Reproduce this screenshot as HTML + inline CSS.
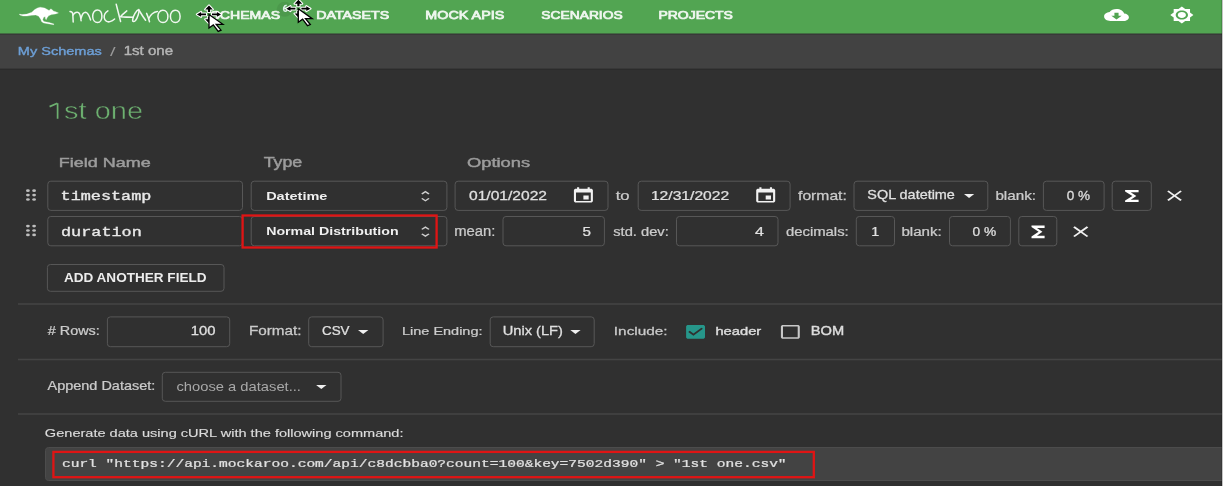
<!DOCTYPE html>
<html><head><meta charset="utf-8"><title>Mockaroo - 1st one</title>
<style>html,body{margin:0;padding:0;background:#303030;overflow:hidden;width:1223px;height:486px}svg{display:block;position:absolute;left:-3px;top:-3px;filter:blur(0.3px)}</style>
</head><body>
<svg width="1229" height="492" viewBox="-3 -3 1229 492">
<rect x="-3" y="-3" width="1229" height="492" fill="#303030"/>
<rect x="0" y="68.6" width="1223" height="1.2" fill="#000" fill-opacity="0.12"/>
<rect x="-3" y="33.5" width="1226" height="35.1" fill="#424242"/>
<rect x="0" y="33.5" width="1223" height="1.3" fill="#000" fill-opacity="0.18"/>
<rect x="-3" y="-3" width="1226" height="36.5" fill="#52a552"/>
<rect x="18" y="303.25" width="1204" height="1.5" fill="#444444"/>
<rect x="18" y="358.75" width="1204" height="1.5" fill="#444444"/>
<rect x="18" y="413.25" width="1204" height="1.5" fill="#444444"/>
<rect x="47.8" y="181.2" width="194.7" height="29.2" rx="3" ry="3" fill="none" stroke="#575757" stroke-width="1"/>
<rect x="251.2" y="181.2" width="195.7" height="29.2" rx="3" ry="3" fill="none" stroke="#575757" stroke-width="1"/>
<rect x="47.8" y="216.5" width="194.7" height="29.3" rx="3" ry="3" fill="none" stroke="#575757" stroke-width="1"/>
<rect x="251.2" y="216.5" width="195.7" height="29.3" rx="3" ry="3" fill="none" stroke="#575757" stroke-width="1"/>
<rect x="455.1" y="181.2" width="152.9" height="29.2" rx="3" ry="3" fill="none" stroke="#575757" stroke-width="1"/>
<rect x="638.2" y="181.2" width="151.9" height="29.2" rx="3" ry="3" fill="none" stroke="#575757" stroke-width="1"/>
<rect x="854.0" y="181.2" width="133.8" height="29.2" rx="3" ry="3" fill="none" stroke="#575757" stroke-width="1"/>
<rect x="1043.4" y="181.2" width="60.7" height="29.2" rx="3" ry="3" fill="none" stroke="#575757" stroke-width="1"/>
<rect x="1112.2" y="181.2" width="39.1" height="29.2" rx="3" ry="3" fill="none" stroke="#575757" stroke-width="1"/>
<rect x="503.0" y="216.5" width="101.4" height="29.3" rx="3" ry="3" fill="none" stroke="#575757" stroke-width="1"/>
<rect x="676.5" y="216.5" width="101.5" height="29.3" rx="3" ry="3" fill="none" stroke="#575757" stroke-width="1"/>
<rect x="856.3" y="216.5" width="38.2" height="29.3" rx="3" ry="3" fill="none" stroke="#575757" stroke-width="1"/>
<rect x="949.5" y="216.5" width="60.9" height="29.3" rx="3" ry="3" fill="none" stroke="#575757" stroke-width="1"/>
<rect x="1018.8" y="216.5" width="38.0" height="29.3" rx="3" ry="3" fill="none" stroke="#575757" stroke-width="1"/>
<rect x="47.4" y="264.5" width="176.6" height="26.8" rx="3" ry="3" fill="none" stroke="#575757" stroke-width="1"/>
<rect x="107.4" y="316.9" width="122.3" height="29.8" rx="3" ry="3" fill="none" stroke="#575757" stroke-width="1"/>
<rect x="308.7" y="316.9" width="74.4" height="29.8" rx="3" ry="3" fill="none" stroke="#575757" stroke-width="1"/>
<rect x="490.2" y="316.9" width="104.0" height="29.8" rx="3" ry="3" fill="none" stroke="#575757" stroke-width="1"/>
<rect x="162.3" y="372.3" width="178.7" height="29.0" rx="3" ry="3" fill="none" stroke="#575757" stroke-width="1"/>
<rect x="45.5" y="447.5" width="1190" height="33" rx="3" fill="#434343" stroke="#4c4c4c" stroke-width="1"/>
<ellipse cx="27.9" cy="190.7" rx="1.9" ry="1.35" fill="#bdbdbd"/>
<ellipse cx="34.1" cy="190.7" rx="1.9" ry="1.35" fill="#bdbdbd"/>
<ellipse cx="27.9" cy="195.1" rx="1.9" ry="1.35" fill="#bdbdbd"/>
<ellipse cx="34.1" cy="195.1" rx="1.9" ry="1.35" fill="#bdbdbd"/>
<ellipse cx="27.9" cy="199.5" rx="1.9" ry="1.35" fill="#bdbdbd"/>
<ellipse cx="34.1" cy="199.5" rx="1.9" ry="1.35" fill="#bdbdbd"/>
<ellipse cx="27.9" cy="226.1" rx="1.9" ry="1.35" fill="#bdbdbd"/>
<ellipse cx="34.1" cy="226.1" rx="1.9" ry="1.35" fill="#bdbdbd"/>
<ellipse cx="27.9" cy="230.5" rx="1.9" ry="1.35" fill="#bdbdbd"/>
<ellipse cx="34.1" cy="230.5" rx="1.9" ry="1.35" fill="#bdbdbd"/>
<ellipse cx="27.9" cy="234.9" rx="1.9" ry="1.35" fill="#bdbdbd"/>
<ellipse cx="34.1" cy="234.9" rx="1.9" ry="1.35" fill="#bdbdbd"/>
<path transform="matrix(0.9150 0 0 0.6000 414.42 189.00)" d="M12 5.83L15.17 9l1.41-1.41L12 3 7.41 7.59 8.83 9 12 5.83zm0 12.34L8.83 15l-1.41 1.41L12 21l4.59-4.59L15.17 15 12 18.17z" fill="#cfcfcf" />
<path transform="matrix(0.9150 0 0 0.6000 414.42 224.40)" d="M12 5.83L15.17 9l1.41-1.41L12 3 7.41 7.59 8.83 9 12 5.83zm0 12.34L8.83 15l-1.41 1.41L12 21l4.59-4.59L15.17 15 12 18.17z" fill="#cfcfcf" />
<path transform="matrix(1.0556 0 0 0.7650 570.73 186.44)" d="M17 12h-5v5h5v-5zM16 1v2H8V1H6v2H5c-1.11 0-1.99.9-1.99 2L3 19c0 1.1.89 2 2 2h14c1.1 0 2-.9 2-2V5c0-1.1-.9-2-2-2h-1V1h-2zm3 18H5V8h14v11z" fill="#f2f2f2" />
<path transform="matrix(1.0556 0 0 0.7650 753.03 186.44)" d="M17 12h-5v5h5v-5zM16 1v2H8V1H6v2H5c-1.11 0-1.99.9-1.99 2L3 19c0 1.1.89 2 2 2h14c1.1 0 2-.9 2-2V5c0-1.1-.9-2-2-2h-1V1h-2zm3 18H5V8h14v11z" fill="#f2f2f2" />
<path transform="matrix(1.0200 0 0 0.7600 956.86 186.50)" d="M7 10l5 5 5-5z" fill="#f0f0f0" />
<path transform="matrix(1.0400 0 0 0.8000 350.72 322.00)" d="M7 10l5 5 5-5z" fill="#f0f0f0" />
<path transform="matrix(1.0300 0 0 0.8000 563.09 322.00)" d="M7 10l5 5 5-5z" fill="#f0f0f0" />
<path transform="matrix(1.0400 0 0 0.7800 308.82 377.30)" d="M7 10l5 5 5-5z" fill="#f0f0f0" />
<path transform="matrix(1.1250 0 0 0.7500 1118.35 187.00)" d="M18 4H6v2l6.5 6L6 18v2h12v-3h-7l5-5-5-5h7z" fill="#ffffff" />
<path transform="matrix(1.0917 0 0 0.7937 1024.95 222.32)" d="M18 4H6v2l6.5 6L6 18v2h12v-3h-7l5-5-5-5h7z" fill="#ffffff" />
<path transform="matrix(1.0429 0 0 0.7429 1161.99 186.79)" d="M19 6.41L17.59 5 12 10.59 6.41 5 5 6.41 10.59 12 5 17.59 6.41 19 12 13.41 17.59 19 19 17.59 13.41 12z" fill="#f0f0f0" />
<path transform="matrix(1.0786 0 0 0.7643 1067.81 222.48)" d="M19 6.41L17.59 5 12 10.59 6.41 5 5 6.41 10.59 12 5 17.59 6.41 19 12 13.41 17.59 19 19 17.59 13.41 12z" fill="#f0f0f0" />
<rect x="688" y="326.5" width="15" height="11" fill="#303030"/>
<path transform="matrix(1.0500 0 0 0.7556 682.95 322.83)" d="M19 3H5c-1.11 0-2 .9-2 2v14c0 1.1.89 2 2 2h14c1.11 0 2-.9 2-2V5c0-1.1-.89-2-2-2zm-9 14l-5-5 1.41-1.41L10 14.17l7.59-7.59L19 8l-9 9z" fill="#26968a" />
<path transform="matrix(1.0500 0 0 0.7556 777.75 322.83)" d="M19 5v14H5V5h14m0-2H5c-1.1 0-2 .9-2 2v14c0 1.1.9 2 2 2h14c1.1 0 2-.9 2-2V5c0-1.1-.9-2-2-2z" fill="#c8c8c8" />
<path d="M57.6,103.2 V118.8 M57.4,103.2 L49.6,106.6" stroke="#6db070" stroke-width="1.7" fill="none"/>
<rect x="242.6" y="215.5" width="194" height="32" fill="none" stroke="#e01414" stroke-width="2.3"/>
<rect x="53.4" y="451.9" width="760.4" height="25.3" fill="none" stroke="#e01414" stroke-width="2.3"/>
<path transform="matrix(1.0333 0 0 0.7438 1104.10 6.12)" d="M19.35 10.04C18.67 6.59 15.64 4 12 4 9.11 4 6.6 5.64 5.35 8.04 2.34 8.36 0 10.91 0 14c0 3.31 2.69 6 6 6h13c2.76 0 5-2.24 5-5 0-2.64-2.05-4.78-4.65-4.96zM17 13l-5 5-5-5h3V9h4v4h3z" fill="#ffffff" />
<path transform="matrix(1.0212 0 0 0.7471 1169.60 6.08)" d="M20 8.69V4h-4.69L12 .69 8.69 4H4v4.69L.69 12 4 15.31V20h4.69L12 23.31 15.31 20H20v-4.69L23.31 12 20 8.69zM12 18c-3.31 0-6-2.69-6-6s2.69-6 6-6 6 2.69 6 6-2.69 6-6 6zm0-10c-2.21 0-4 1.79-4 4s1.79 4 4 4 4-1.79 4-4-1.79-4-4-4z" fill="#ffffff" />
<rect x="1222" y="-3" width="4" height="492" fill="#c4c4c4"/>
<rect x="1221" y="-3" width="1" height="492" fill="#000" fill-opacity="0.15"/>
<path d="M19.22,14.12 L21.94,14.62 L26.88,14.12 L31.81,12.15 L34.78,9.43 L37.50,7.90 L40.21,7.21 L44.65,7.95 L49.10,10.42 L50.58,8.94 L51.57,9.19 L53.79,11.16 L55.02,11.41 L58.48,12.89 L55.52,13.88 L51.57,14.62 L48.60,15.85 L47.12,17.83 L46.14,19.80 L45.40,18.81 L45.15,16.59 L43.67,17.33 L42.68,19.80 L43.91,21.53 L49.10,22.52 L54.04,24.00 L53.54,24.74 L43.67,23.01 L41.69,21.78 L40.70,19.31 L38.73,16.35 L35.77,15.11 L31.81,15.36 L26.88,16.10 L22.93,16.10 L19.96,15.11 Z" fill="#ffffff" stroke="#ffffff" stroke-width="0.25" stroke-linejoin="round"/>
<path d="M70,11.6 C71.5,11.8 72.6,12.5 72.8,14 L73.2,22" fill="none" stroke="#f0f7f0" stroke-width="1.5" stroke-linecap="round" stroke-linejoin="round"/>
<path d="M73.2,15 C74.5,12.5 77,11.8 78.5,12.6 C80,13.6 80.8,17.5 81.1,20.8" fill="none" stroke="#f0f7f0" stroke-width="1.5" stroke-linecap="round" stroke-linejoin="round"/>
<path d="M81.2,18 C82,14.5 84,12.2 85.7,12.2 C87.5,12.4 89.5,16.5 90.6,19.9" fill="none" stroke="#f0f7f0" stroke-width="1.5" stroke-linecap="round" stroke-linejoin="round"/>
<path d="M97.3,9.9 C94.5,9.9 92.6,13 92.7,16.5 C92.8,20 94.8,22.6 97.5,22.6 C100.3,22.5 102,19.5 101.9,16 C101.8,12.5 100,9.9 97.3,9.9 Z" fill="none" stroke="#f0f7f0" stroke-width="1.5" stroke-linecap="round" stroke-linejoin="round"/>
<path d="M107.9,10.8 C105,12.5 104,15 104.2,17.5 C104.5,21 107.5,22.5 110,21.6 C112,21 113.5,20 114.6,19" fill="none" stroke="#f0f7f0" stroke-width="1.5" stroke-linecap="round" stroke-linejoin="round"/>
<path d="M116.2,4.2 L120.6,21.5" fill="none" stroke="#f0f7f0" stroke-width="1.5" stroke-linecap="round" stroke-linejoin="round"/>
<path d="M126.8,10.9 C124.5,12.8 122,15 120.4,16.8 C124.5,17.2 129,17.3 133.2,17.3" fill="none" stroke="#f0f7f0" stroke-width="1.5" stroke-linecap="round" stroke-linejoin="round"/>
<path d="M138.9,9.5 C136.5,10 133,16 132.6,20 C132.5,22 134,22 135.5,20.5 C137.5,18 139.5,12 138.9,9.5 Z" fill="none" stroke="#f0f7f0" stroke-width="1.5" stroke-linecap="round" stroke-linejoin="round"/>
<path d="M139.2,10.5 C141,13.5 143.5,17.5 145.6,20.3" fill="none" stroke="#f0f7f0" stroke-width="1.5" stroke-linecap="round" stroke-linejoin="round"/>
<path d="M146.6,13.4 C147.8,16 148.8,19 149.5,21.7" fill="none" stroke="#f0f7f0" stroke-width="1.5" stroke-linecap="round" stroke-linejoin="round"/>
<path d="M148.8,18.5 C150.5,14.5 153.5,12 157.4,11.4" fill="none" stroke="#f0f7f0" stroke-width="1.5" stroke-linecap="round" stroke-linejoin="round"/>
<path d="M162.8,10.2 C159.8,10.2 157.8,13.2 157.9,16.6 C158,20 160.2,22.6 163,22.6 C166,22.5 168,19.7 167.9,16.3 C167.8,12.8 165.8,10.2 162.8,10.2 Z" fill="none" stroke="#f0f7f0" stroke-width="1.5" stroke-linecap="round" stroke-linejoin="round"/>
<path d="M175.2,10.2 C172.2,10.2 170.3,13.2 170.4,16.6 C170.5,20 172.6,22.6 175.4,22.6 C178.3,22.5 180.2,19.7 180.1,16.3 C180,12.8 178.2,10.2 175.2,10.2 Z" fill="none" stroke="#f0f7f0" stroke-width="1.5" stroke-linecap="round" stroke-linejoin="round"/>
<text transform="matrix(1.2351 0 0 1 210.44 18.90)" font-family="Liberation Sans" font-weight="normal" font-size="11.41" fill="#eef6ee" stroke="#eef6ee" stroke-width="0.75" >SCHEMAS</text>
<text transform="matrix(1.2466 0 0 1 316.26 18.90)" font-family="Liberation Sans" font-weight="normal" font-size="11.41" fill="#eef6ee" stroke="#eef6ee" stroke-width="0.75" >DATASETS</text>
<text transform="matrix(1.2585 0 0 1 425.35 18.90)" font-family="Liberation Sans" font-weight="normal" font-size="11.41" fill="#eef6ee" stroke="#eef6ee" stroke-width="0.75" >MOCK APIS</text>
<text transform="matrix(1.2108 0 0 1 541.35 18.90)" font-family="Liberation Sans" font-weight="normal" font-size="11.41" fill="#eef6ee" stroke="#eef6ee" stroke-width="0.75" >SCENARIOS</text>
<text transform="matrix(1.2265 0 0 1 658.38 18.90)" font-family="Liberation Sans" font-weight="normal" font-size="11.41" fill="#eef6ee" stroke="#eef6ee" stroke-width="0.75" >PROJECTS</text>
<text transform="matrix(1.2498 0 0 1 17.84 54.90)" font-family="Liberation Sans" font-weight="normal" font-size="11.64" fill="#6d9fd6" stroke="#6d9fd6" stroke-width="0.4" >My Schemas</text>
<text transform="matrix(1.4600 0 0 1 110.00 56.00)" font-family="Liberation Sans" font-weight="normal" font-size="13.70" fill="#9a9a9a"  >/</text>
<text transform="matrix(1.2250 0 0 1 123.64 54.90)" font-family="Liberation Sans" font-weight="normal" font-size="12.32" fill="#b5b5b5" stroke="#b5b5b5" stroke-width="0.4" >1st one</text>
<text transform="matrix(1.2245 0 0 1 64.12 118.80)" font-family="Liberation Sans" font-weight="normal" font-size="23.69" fill="#6db070"  stroke="#303030" stroke-width="0.5">st one</text>
<text transform="matrix(1.3417 0 0 1 58.86 166.80)" font-family="Liberation Sans" font-weight="normal" font-size="13.42" fill="#9c9c9c" stroke="#9c9c9c" stroke-width="0.45" >Field Name</text>
<text transform="matrix(1.2569 0 0 1 263.64 166.80)" font-family="Liberation Sans" font-weight="normal" font-size="14.20" fill="#9c9c9c" stroke="#9c9c9c" stroke-width="0.45" >Type</text>
<text transform="matrix(1.3657 0 0 1 466.97 166.80)" font-family="Liberation Sans" font-weight="normal" font-size="13.42" fill="#9c9c9c" stroke="#9c9c9c" stroke-width="0.45" >Options</text>
<text transform="matrix(1.3060 0 0 1 60.59 200.40)" font-family="Liberation Mono" font-weight="normal" font-size="12.88" fill="#e8e8e8" stroke="#e8e8e8" stroke-width="0.35" >timestamp</text>
<text transform="matrix(1.2776 0 0 1 266.13 199.80)" font-family="Liberation Sans" font-weight="bold" font-size="11.37" fill="#f0f0f0"  >Datetime</text>
<text transform="matrix(1.2655 0 0 1 469.03 199.90)" font-family="Liberation Sans" font-weight="normal" font-size="12.33" fill="#e0e0e0" stroke="#e0e0e0" stroke-width="0.25" >01/01/2022</text>
<text transform="matrix(1.3343 0 0 1 615.73 199.90)" font-family="Liberation Sans" font-weight="normal" font-size="12.46" fill="#cbcbcb" stroke="#cbcbcb" stroke-width="0.25" >to</text>
<text transform="matrix(1.2709 0 0 1 650.90 199.90)" font-family="Liberation Sans" font-weight="normal" font-size="12.33" fill="#e0e0e0" stroke="#e0e0e0" stroke-width="0.25" >12/31/2022</text>
<text transform="matrix(1.2319 0 0 1 798.04 199.90)" font-family="Liberation Sans" font-weight="normal" font-size="12.74" fill="#cbcbcb" stroke="#cbcbcb" stroke-width="0.25" >format:</text>
<text transform="matrix(1.2090 0 0 1 867.32 199.20)" font-family="Liberation Sans" font-weight="normal" font-size="11.92" fill="#e0e0e0" stroke="#e0e0e0" stroke-width="0.25" >SQL datetime</text>
<text transform="matrix(1.1958 0 0 1 995.39 199.90)" font-family="Liberation Sans" font-weight="normal" font-size="12.74" fill="#cbcbcb" stroke="#cbcbcb" stroke-width="0.25" >blank:</text>
<text transform="matrix(1.0401 0 0 1 1066.69 200.00)" font-family="Liberation Sans" font-weight="normal" font-size="13.00" fill="#e0e0e0" stroke="#e0e0e0" stroke-width="0.25" >0 %</text>
<text transform="matrix(1.3080 0 0 1 60.99 235.70)" font-family="Liberation Mono" font-weight="normal" font-size="12.88" fill="#e8e8e8" stroke="#e8e8e8" stroke-width="0.35" >duration</text>
<text transform="matrix(1.2796 0 0 1 266.15 235.30)" font-family="Liberation Sans" font-weight="bold" font-size="11.10" fill="#f0f0f0"  >Normal Distribution</text>
<text transform="matrix(1.0394 0 0 1 454.21 235.70)" font-family="Liberation Sans" font-weight="normal" font-size="14.26" fill="#cbcbcb" stroke="#cbcbcb" stroke-width="0.25" >mean:</text>
<text transform="matrix(1.1164 0 0 1 582.59 235.80)" font-family="Liberation Sans" font-weight="normal" font-size="13.62" fill="#e0e0e0" stroke="#e0e0e0" stroke-width="0.25" >5</text>
<text transform="matrix(1.2062 0 0 1 613.21 235.70)" font-family="Liberation Sans" font-weight="normal" font-size="12.19" fill="#cbcbcb" stroke="#cbcbcb" stroke-width="0.25" >std. dev:</text>
<text transform="matrix(1.1973 0 0 1 755.08 235.80)" font-family="Liberation Sans" font-weight="normal" font-size="13.43" fill="#e0e0e0" stroke="#e0e0e0" stroke-width="0.25" >4</text>
<text transform="matrix(1.2216 0 0 1 785.90 235.70)" font-family="Liberation Sans" font-weight="normal" font-size="12.19" fill="#cbcbcb" stroke="#cbcbcb" stroke-width="0.25" >decimals:</text>
<text transform="matrix(1.1623 0 0 1 871.20 235.50)" font-family="Liberation Sans" font-weight="normal" font-size="12.32" fill="#e0e0e0" stroke="#e0e0e0" stroke-width="0.25" >1</text>
<text transform="matrix(1.2572 0 0 1 901.39 235.50)" font-family="Liberation Sans" font-weight="normal" font-size="12.05" fill="#cbcbcb" stroke="#cbcbcb" stroke-width="0.25" >blank:</text>
<text transform="matrix(1.0471 0 0 1 972.59 235.60)" font-family="Liberation Sans" font-weight="normal" font-size="13.14" fill="#e0e0e0" stroke="#e0e0e0" stroke-width="0.25" >0 %</text>
<text transform="matrix(1.1181 0 0 1 63.93 281.50)" font-family="Liberation Sans" font-weight="bold" font-size="12.14" fill="#ececec"  >ADD ANOTHER FIELD</text>
<text transform="matrix(1.1847 0 0 1 47.80 334.90)" font-family="Liberation Sans" font-weight="normal" font-size="12.14" fill="#cbcbcb" stroke="#cbcbcb" stroke-width="0.25" ># Rows:</text>
<text transform="matrix(1.2229 0 0 1 190.76 334.90)" font-family="Liberation Sans" font-weight="normal" font-size="12.14" fill="#e0e0e0" stroke="#e0e0e0" stroke-width="0.25" >100</text>
<text transform="matrix(1.2411 0 0 1 248.88 334.90)" font-family="Liberation Sans" font-weight="normal" font-size="12.32" fill="#cbcbcb" stroke="#cbcbcb" stroke-width="0.25" >Format:</text>
<text transform="matrix(1.1225 0 0 1 321.93 334.90)" font-family="Liberation Sans" font-weight="normal" font-size="11.97" fill="#e0e0e0" stroke="#e0e0e0" stroke-width="0.25" >CSV</text>
<text transform="matrix(1.2439 0 0 1 402.04 334.90)" font-family="Liberation Sans" font-weight="normal" font-size="11.64" fill="#cbcbcb" stroke="#cbcbcb" stroke-width="0.25" >Line Ending:</text>
<text transform="matrix(1.1856 0 0 1 502.68 334.90)" font-family="Liberation Sans" font-weight="normal" font-size="12.35" fill="#e0e0e0" stroke="#e0e0e0" stroke-width="0.25" >Unix (LF)</text>
<text transform="matrix(1.3047 0 0 1 613.82 335.20)" font-family="Liberation Sans" font-weight="normal" font-size="11.78" fill="#cbcbcb" stroke="#cbcbcb" stroke-width="0.25" >Include:</text>
<text transform="matrix(1.2958 0 0 1 715.42 335.10)" font-family="Liberation Sans" font-weight="normal" font-size="11.37" fill="#dcdcdc" stroke="#dcdcdc" stroke-width="0.4" >header</text>
<text transform="matrix(1.2384 0 0 1 810.73 335.10)" font-family="Liberation Sans" font-weight="normal" font-size="11.86" fill="#dcdcdc" stroke="#dcdcdc" stroke-width="0.4" >BOM</text>
<text transform="matrix(1.1866 0 0 1 47.60 390.10)" font-family="Liberation Sans" font-weight="normal" font-size="12.19" fill="#cbcbcb" stroke="#cbcbcb" stroke-width="0.25" >Append Dataset:</text>
<text transform="matrix(1.2371 0 0 1 176.51 391.00)" font-family="Liberation Sans" font-weight="normal" font-size="11.92" fill="#a8a8a8"  >choose a dataset...</text>
<text transform="matrix(1.3125 0 0 1 44.87 436.80)" font-family="Liberation Sans" font-weight="normal" font-size="11.10" fill="#dcdcdc" stroke="#dcdcdc" stroke-width="0.15" >Generate data using cURL with the following command:</text>
<text transform="matrix(1.3114 0 0 1 61.93 466.60)" font-family="Liberation Mono" font-weight="normal" font-size="11.10" fill="#e0e0e0" stroke="#e0e0e0" stroke-width="0.25" >curl "https://api.mockaroo.com/api/c8dcbba0?count=100&amp;key=7502d390" &gt; "1st one.csv"</text>
<ellipse cx="284.7" cy="9.2" rx="8" ry="7.5" fill="#000" fill-opacity="0.07"/>
<path d="M286.8,5.6 C284.5,5 283.4,7.5 283.6,9.5 C283.8,11.6 286.5,11.8 287,10 C287.3,8.6 286,7.8 283.8,8.8" fill="none" stroke="#dcefe6" stroke-width="1.5"/>
<path d="M196.9,14.4 L201.1,11.95 L201.1,13.55 L206.0,13.55 L206.0,15.25 L201.1,15.25 L201.1,16.85 Z M221.0,14.4 L216.9,11.95 L216.9,13.55 L212.0,13.55 L212.0,15.25 L216.9,15.25 L216.9,16.85 Z M209.0,5.5 L205.2,9.5 L207.9,9.5 L207.9,12.0 L210.1,12.0 L210.1,9.5 L212.8,9.5 Z M209.0,23.3 L205.2,19.3 L207.9,19.3 L207.9,16.8 L210.1,16.8 L210.1,19.3 L212.8,19.3 Z" fill="#fff" stroke="#fff" stroke-width="2.2" stroke-linejoin="round"/><path d="M196.9,14.4 L201.1,11.95 L201.1,13.55 L206.0,13.55 L206.0,15.25 L201.1,15.25 L201.1,16.85 Z M221.0,14.4 L216.9,11.95 L216.9,13.55 L212.0,13.55 L212.0,15.25 L216.9,15.25 L216.9,16.85 Z M209.0,5.5 L205.2,9.5 L207.9,9.5 L207.9,12.0 L210.1,12.0 L210.1,9.5 L212.8,9.5 Z M209.0,23.3 L205.2,19.3 L207.9,19.3 L207.9,16.8 L210.1,16.8 L210.1,19.3 L212.8,19.3 Z" fill="#000"/>
<path d="M209.0,14.4 L209.0,28.0 L213.3,24.9 L218.2,31.4 L221.0,30.2 L216.2,24.3 L222.9,24.3 Z" fill="#fff" stroke="#000" stroke-width="1.3" stroke-linejoin="miter"/>
<path d="M286.29999999999995,8.65 L290.5,6.2 L290.5,7.800000000000001 L295.4,7.800000000000001 L295.4,9.5 L290.5,9.5 L290.5,11.100000000000001 Z M310.4,8.65 L306.29999999999995,6.2 L306.29999999999995,7.800000000000001 L301.4,7.800000000000001 L301.4,9.5 L306.29999999999995,9.5 L306.29999999999995,11.100000000000001 Z M298.4,-0.25 L294.59999999999997,3.75 L297.29999999999995,3.75 L297.29999999999995,6.25 L299.5,6.25 L299.5,3.75 L302.2,3.75 Z M298.4,17.55 L294.59999999999997,13.55 L297.29999999999995,13.55 L297.29999999999995,11.05 L299.5,11.05 L299.5,13.55 L302.2,13.55 Z" fill="#fff" stroke="#fff" stroke-width="2.2" stroke-linejoin="round"/><path d="M286.29999999999995,8.65 L290.5,6.2 L290.5,7.800000000000001 L295.4,7.800000000000001 L295.4,9.5 L290.5,9.5 L290.5,11.100000000000001 Z M310.4,8.65 L306.29999999999995,6.2 L306.29999999999995,7.800000000000001 L301.4,7.800000000000001 L301.4,9.5 L306.29999999999995,9.5 L306.29999999999995,11.100000000000001 Z M298.4,-0.25 L294.59999999999997,3.75 L297.29999999999995,3.75 L297.29999999999995,6.25 L299.5,6.25 L299.5,3.75 L302.2,3.75 Z M298.4,17.55 L294.59999999999997,13.55 L297.29999999999995,13.55 L297.29999999999995,11.05 L299.5,11.05 L299.5,13.55 L302.2,13.55 Z" fill="#000"/>
<path d="M298.3,8.7 L298.3,22.2 L302.6,19.1 L307.5,25.6 L310.3,24.5 L305.5,18.6 L312.2,18.6 Z" fill="#fff" stroke="#000" stroke-width="1.3" stroke-linejoin="miter"/>
</svg>
</body></html>
